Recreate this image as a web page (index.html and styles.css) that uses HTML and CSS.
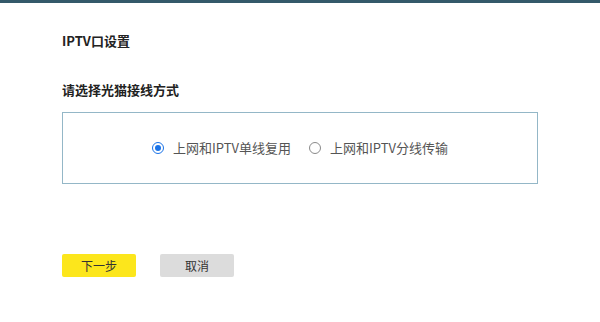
FILE: index.html
```html
<!DOCTYPE html>
<html lang="zh">
<head>
<meta charset="utf-8">
<link rel="stylesheet" href="styles.css">
</head>
<body>
<div class="topbar"></div>
<main class="content">
  <h1 class="title">IPTV口设置</h1>
  <h2 class="subtitle">请选择光猫接线方式</h2>
  <div class="box">
    <label class="option">
      <span class="radio checked"></span>
      <span class="label">上网和IPTV单线复用</span>
    </label>
    <label class="option">
      <span class="radio"></span>
      <span class="label">上网和IPTV分线传输</span>
    </label>
  </div>
  <div class="actions">
    <button class="btn btn-primary">下一步</button>
    <button class="btn btn-secondary">取消</button>
  </div>
</main>
</body>
</html>
```
FILE: styles.css
```css
* { box-sizing: border-box; }
html, body { margin: 0; padding: 0; background: #ffffff; }
body {
  font-family: "Noto Sans CJK SC", "Microsoft YaHei", sans-serif;
  color: #333;
  width: 600px;
  height: 322px;
  overflow: hidden;
}
.topbar {
  height: 3px;
  background: #34596a;
}
.content {
  padding: 30px 62px 0 62px;
}
.title {
  margin: 0;
  font-size: 13px;
  line-height: 16px;
  font-weight: bold;
  color: #222;
}
.subtitle {
  margin: 33px 0 0 0;
  font-size: 13px;
  line-height: 16px;
  font-weight: bold;
  color: #222;
}
.box {
  margin-top: 14px;
  width: 476px;
  height: 72px;
  border: 1px solid #94b7c7;
  display: flex;
  align-items: center;
  justify-content: center;
  gap: 18px;
}
.option {
  display: flex;
  align-items: center;
  gap: 9px;
  font-size: 13px;
  line-height: 16px;
  color: #555;
}
.radio {
  width: 12px;
  height: 12px;
  border-radius: 50%;
  border: 1px solid #8a8a8a;
  background: #fff;
  position: relative;
  flex: none;
}
.radio.checked {
  border-color: #1a73e8;
}
.radio.checked::after {
  content: "";
  position: absolute;
  left: 2px;
  top: 2px;
  width: 6px;
  height: 6px;
  border-radius: 50%;
  background: #1a73e8;
}
.actions {
  margin-top: 70px;
  display: flex;
  gap: 24px;
}
.btn {
  width: 74px;
  height: 23px;
  border: none;
  border-radius: 2px;
  font-family: inherit;
  font-size: 12px;
  line-height: 23px;
  padding: 0;
  color: #333;
}
.btn-primary { background: #fce61c; }
.btn-secondary { background: #dcdcdc; }
```
